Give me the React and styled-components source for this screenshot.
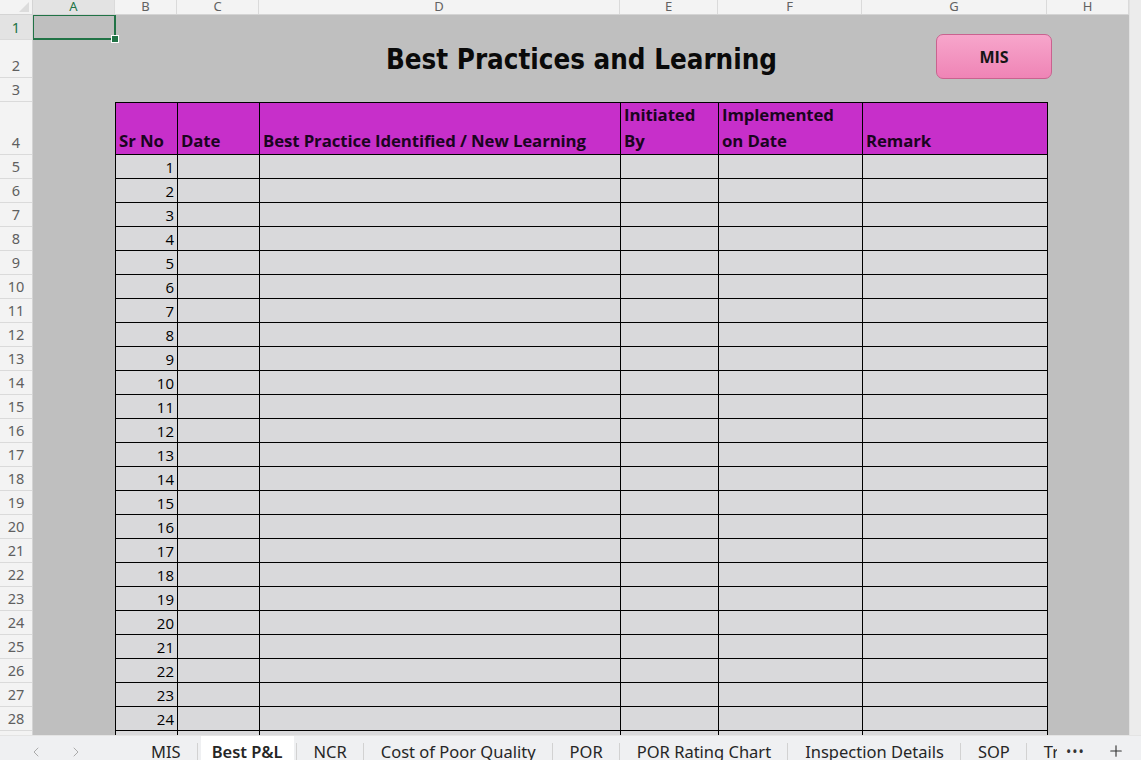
import styled, { createGlobalStyle } from "styled-components";
import { ChevronLeft, ChevronRight, Plus } from "lucide-react";

const GlobalStyle = createGlobalStyle`
  html, body {
    margin: 0;
    padding: 0;
    overflow: hidden;
    background: #f0f0f0;
  }
`;

const columns = [
  { key: "A", width: 82 },
  { key: "B", width: 62 },
  { key: "C", width: 82 },
  { key: "D", width: 361 },
  { key: "E", width: 98 },
  { key: "F", width: 144 },
  { key: "G", width: 185 },
  { key: "H", width: 82 },
];

const rowHeights = [25, 38, 24, 53, ...Array(26).fill(24)];

const tableCols = [
  { title: "Sr No", width: 62 },
  { title: "Date", width: 82 },
  { title: "Best Practice Identified / New Learning", width: 361 },
  { title: "Initiated\nBy", width: 98 },
  { title: "Implemented\non Date", width: 144 },
  { title: "Remark", width: 185 },
];

const tabs = [
  "MIS",
  "Best P&L",
  "NCR",
  "Cost of Poor Quality",
  "POR",
  "POR Rating Chart",
  "Inspection Details",
  "SOP",
  "Trend",
];

const Page = styled.div`
  width: 1141px;
  height: 760px;
  display: flex;
  flex-direction: column;
  overflow: hidden;
  font-family: "Noto Sans", sans-serif;
`;

const Sheet = styled.div`
  height: 735px;
  display: flex;
  overflow: hidden;
`;

const SheetMain = styled.div`
  width: 1129px;
  display: flex;
  flex-direction: column;
`;

const ScrollStrip = styled.div`
  flex: 1;
  background: #ececec;
  border-left: 1px solid #e2e2e2;
`;

const HeaderBar = styled.div`
  display: flex;
  height: 15px;
  background: #f3f3f3;
  border-bottom: 1px solid #d4d4d4;
  box-sizing: border-box;
`;

const Corner = styled.div`
  width: 33px;
  flex: none;
  position: relative;
  border-right: 1px solid #d4d4d4;
  box-sizing: border-box;
  &::after {
    content: "";
    position: absolute;
    right: 3px;
    bottom: 2px;
    border-left: 10px solid transparent;
    border-bottom: 10px solid #dcdcdc;
  }
`;

const ColHead = styled.div`
  flex: none;
  width: ${(p) => p.$w}px;
  box-sizing: border-box;
  border-right: 1px solid #dadada;
  text-align: center;
  font-size: 13px;
  line-height: 12px;
  color: ${(p) => (p.$active ? "#217346" : "#616161")};
  background: ${(p) => (p.$active ? "#e3e3e3" : "transparent")};
  overflow: hidden;
`;

const Body = styled.div`
  flex: 1;
  display: flex;
  overflow: hidden;
`;

const RowHeads = styled.div`
  width: 33px;
  flex: none;
  background: #f3f3f3;
  border-right: 1px solid #d4d4d4;
  box-sizing: border-box;
  display: flex;
  flex-direction: column;
`;

const RowHead = styled.div`
  flex: none;
  height: ${(p) => p.$h}px;
  box-sizing: border-box;
  border-bottom: 1px solid #dadada;
  display: flex;
  align-items: flex-end;
  justify-content: center;
  font-size: 14.5px;
  line-height: 23px;
  color: ${(p) => (p.$active ? "#217346" : "#5f5f5f")};
  background: ${(p) => (p.$active ? "#e3e3e3" : "transparent")};
`;

const Canvas = styled.div`
  flex: 1;
  position: relative;
  background: #bfbfbf;
  display: grid;
  grid-template-columns: 82px 933px 1fr;
  grid-template-rows: 25px 38px 24px auto;
  align-content: start;
  overflow: hidden;
`;

const Selection = styled.div`
  grid-column: 1;
  grid-row: 1;
  position: relative;
  width: 84px;
  height: 26px;
  margin: -1px 0 0 -1px;
  box-sizing: border-box;
  border: 2px solid #217346;
  &::after {
    content: "";
    position: absolute;
    right: -5px;
    bottom: -5px;
    width: 6px;
    height: 6px;
    background: #217346;
    border: 1px solid #ffffff;
  }
`;

const Title = styled.h1`
  grid-column: 2;
  grid-row: 2;
  margin: 0;
  display: flex;
  align-items: center;
  justify-content: center;
  font-family: "DejaVu Sans Condensed", "DejaVu Sans", sans-serif;
  font-weight: bold;
  font-size: 27.5px;
  color: #0a0a0a;
`;

const MisButton = styled.button`
  position: absolute;
  left: 903px;
  top: 19px;
  width: 116px;
  height: 45px;
  border: 1px solid #c9628f;
  border-radius: 7px;
  background: linear-gradient(#f7a6cb, #ef84b6);
  font-family: "Open Sans", sans-serif;
  font-weight: 700;
  font-size: 16px;
  color: #151515;
  padding: 0;
  cursor: pointer;
`;

const Table = styled.div`
  grid-column: 2;
  grid-row: 4;
  display: grid;
  grid-template-columns: ${tableCols.map((c) => `${c.width}px`).join(" ")};
  border-left: 1px solid #000;
  border-top: 1px solid #000;
  font-family: "Open Sans", sans-serif;
  font-size: 15px;
  color: #000;
`;

const HeadCell = styled.div`
  height: 52px;
  box-sizing: border-box;
  border-right: 1px solid #000;
  border-bottom: 1px solid #000;
  background: #c72fca;
  display: flex;
  align-items: flex-end;
  padding: 0 3px;
  font-size: 16.8px;
  font-weight: 700;
  line-height: 26px;
  color: #1a0420;
  white-space: pre-line;
  letter-spacing: -0.1px;
`;

const Cell = styled.div`
  height: 24px;
  box-sizing: border-box;
  border-right: 1px solid #000;
  border-bottom: 1px solid #000;
  background: #d9d9db;
  display: flex;
  align-items: center;
  justify-content: ${(p) => (p.$num ? "flex-end" : "flex-start")};
  padding: 1px 3px 0;
  line-height: 22px;
`;

const TabBar = styled.div`
  height: 25px;
  display: flex;
  background: #eff0f2;
  border-top: 1px solid #e4e4e4;
  box-sizing: border-box;
`;

const Nav = styled.div`
  width: 134px;
  flex: none;
  display: flex;
  align-items: center;
  padding-left: 28px;
  gap: 24px;
  color: #a6a6a6;
  padding-top: 7px;
  box-sizing: border-box;
`;

const TabList = styled.div`
  width: 923px;
  flex: none;
  display: flex;
  overflow: hidden;
`;

const Tab = styled.div`
  flex: none;
  position: relative;
  margin: 0 3px;
  padding: 5px ${(p) => (p.$active ? 11 : 14)}px 0;
  font-size: 16.5px;
  line-height: 22px;
  white-space: nowrap;
  color: #262626;
  font-weight: ${(p) => (p.$active ? 600 : 400)};
  background: ${(p) => (p.$active ? "#ffffff" : "transparent")};
  &::before {
    content: "";
    display: ${(p) => (p.$first ? "none" : "block")};
    position: absolute;
    left: -4px;
    top: 7px;
    height: 20px;
    width: 1px;
    background: #d2d2d2;
  }
`;

const Tools = styled.div`
  flex: 1;
  display: flex;
  align-items: center;
  padding: 6px 0 0 9px;
  gap: 22px;
  color: #333;
  font-size: 14px;
  letter-spacing: 1px;
`;

export default function App() {
  return (
    <Page>
      <GlobalStyle />
      <Sheet>
        <SheetMain>
          <HeaderBar>
            <Corner />
            {columns.map((c) => (
              <ColHead key={c.key} $w={c.width} $active={c.key === "A"}>
                {c.key}
              </ColHead>
            ))}
          </HeaderBar>
          <Body>
            <RowHeads>
              {rowHeights.map((h, i) => (
                <RowHead key={i} $h={h} $active={i === 0}>
                  {i + 1}
                </RowHead>
              ))}
            </RowHeads>
            <Canvas>
              <Selection />
              <Title>Best Practices and Learning</Title>
              <MisButton>MIS</MisButton>
              <Table>
                {tableCols.map((c) => (
                  <HeadCell key={c.title}>{c.title}</HeadCell>
                ))}
                {Array.from({ length: 25 }, (_, r) =>
                  tableCols.map((c, ci) => (
                    <Cell key={`${r}-${ci}`} $num={ci === 0}>
                      {ci === 0 ? r + 1 : ""}
                    </Cell>
                  ))
                )}
              </Table>
            </Canvas>
          </Body>
        </SheetMain>
        <ScrollStrip />
      </Sheet>
      <TabBar>
        <Nav>
          <ChevronLeft size={16} strokeWidth={1.4} />
          <ChevronRight size={16} strokeWidth={1.4} />
        </Nav>
        <TabList>
          {tabs.map((t, i) => (
            <Tab key={t} $active={t === "Best P&L"} $first={i === 0}>
              {t}
            </Tab>
          ))}
        </TabList>
        <Tools>
          <span>•••</span>
          <Plus size={18} strokeWidth={1.5} />
        </Tools>
      </TabBar>
    </Page>
  );
}
